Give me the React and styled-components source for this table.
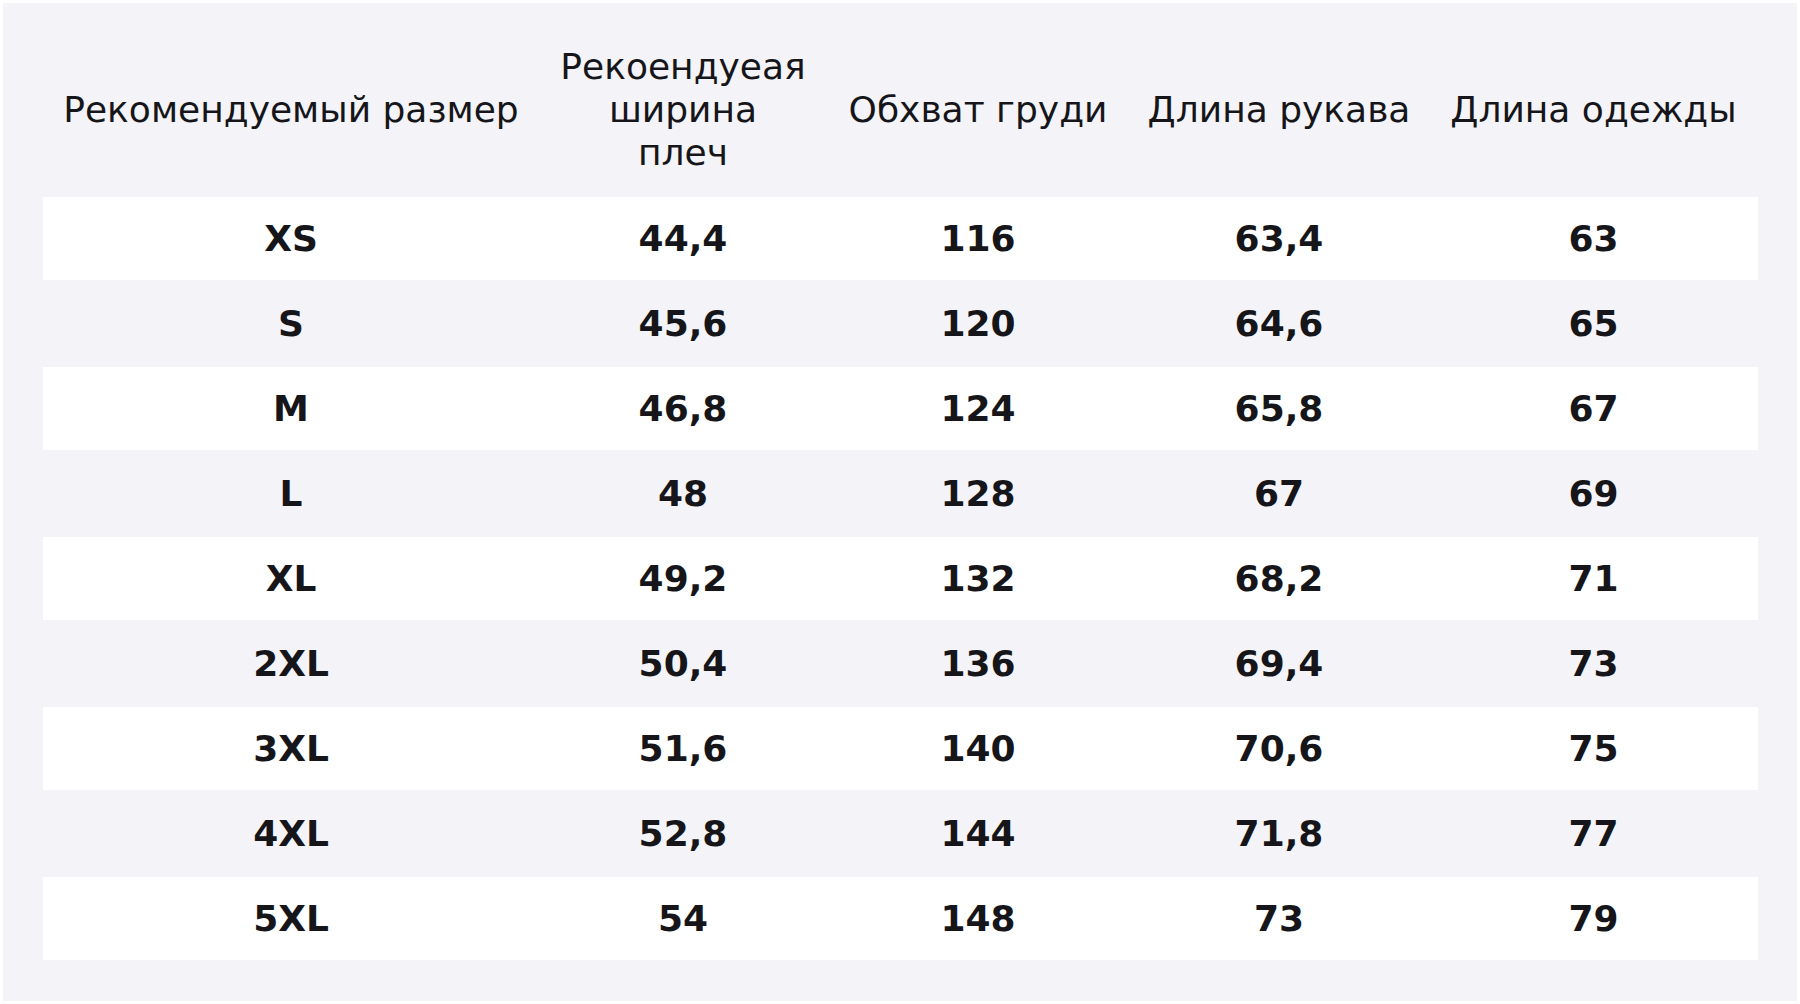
import React from 'react';
import styled, { createGlobalStyle } from 'styled-components';

const GlobalStyle = createGlobalStyle`
  html, body {
    margin: 0;
    padding: 0;
    background: #ffffff;
  }
  body {
    font-family: 'DejaVu Sans', 'Liberation Sans', sans-serif;
    color: #16161a;
  }
`;

const Page = styled.div`
  padding: 3px;
  background: #ffffff;
`;

const Panel = styled.div`
  background: #f4f4f8;
  padding: 20px 40px 42px;
  height: 998px;
  box-sizing: border-box;
`;

const Table = styled.table`
  width: 1715px;
  table-layout: fixed;
  border-collapse: separate;
  border-spacing: 0;
`;

const HeadCell = styled.th`
  font-weight: normal;
  font-size: 36px;
  line-height: 43px;
  text-align: center;
  vertical-align: middle;
  padding: 22px ${({ inset }) => inset}px 22px;
  height: 129px;
`;

const Row = styled.tr`
  height: 85px;
`;

const Cell = styled.td`
  height: 85px;
  box-sizing: border-box;
  padding: 0;
  border-top: 1px solid #f4f4f8;
  border-bottom: 1px solid #f4f4f8;
  background: ${({ striped }) => (striped ? '#ffffff' : '#f4f4f8')};
  font-size: 36px;
  line-height: 42px;
  font-weight: bold;
  text-align: center;
  vertical-align: middle;
`;

const columns = [
  { title: 'Рекомендуемый размер', width: 496, inset: 4 },
  { title: 'Рекоендуеая ширина плеч', width: 288, inset: 21 },
  { title: 'Обхват груди', width: 302, inset: 4 },
  { title: 'Длина рукава', width: 300, inset: 4 },
  { title: 'Длина одежды', width: 329, inset: 4 },
];

const rows = [
  ['XS', '44,4', '116', '63,4', '63'],
  ['S', '45,6', '120', '64,6', '65'],
  ['M', '46,8', '124', '65,8', '67'],
  ['L', '48', '128', '67', '69'],
  ['XL', '49,2', '132', '68,2', '71'],
  ['2XL', '50,4', '136', '69,4', '73'],
  ['3XL', '51,6', '140', '70,6', '75'],
  ['4XL', '52,8', '144', '71,8', '77'],
  ['5XL', '54', '148', '73', '79'],
];

function App() {
  return (
    <Page>
      <GlobalStyle />
      <Panel>
        <Table>
          <colgroup>
            {columns.map((col) => (
              <col key={col.title} style={{ width: col.width }} />
            ))}
          </colgroup>
          <thead>
            <tr>
              {columns.map((col) => (
                <HeadCell key={col.title} inset={col.inset}>
                  {col.title}
                </HeadCell>
              ))}
            </tr>
          </thead>
          <tbody>
            {rows.map((row, i) => (
              <Row key={row[0]}>
                {row.map((value, j) => (
                  <Cell key={j} striped={i % 2 === 0}>
                    {value}
                  </Cell>
                ))}
              </Row>
            ))}
          </tbody>
        </Table>
      </Panel>
    </Page>
  );
}

export default App;
